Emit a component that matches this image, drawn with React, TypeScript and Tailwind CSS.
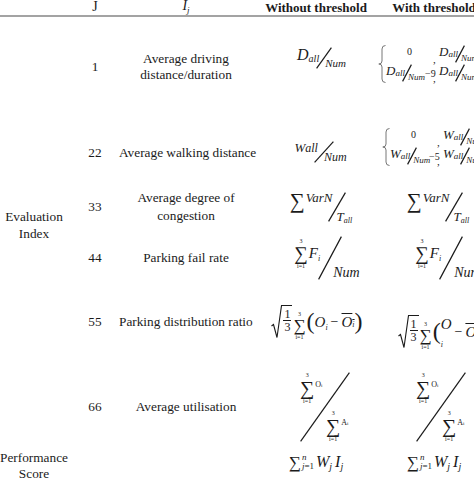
import React from "react";

const INK = "#1b1b1b";

const Slash = ({ w, h, className = "" }: { w: number; h: number; className?: string }) => (
  <svg width={w} height={h} viewBox={`0 0 ${w} ${h}`} className={"block shrink-0 " + className}>
    <line x1={0.6} y1={h - 0.6} x2={w - 0.6} y2={0.6} stroke={INK} strokeWidth={1.2} />
  </svg>
);

const Brace = ({ h }: { h: number }) => {
  const m = h / 2;
  return (
    <svg width={8} height={h} className="block shrink-0">
      <path
        d={`M7.5 0.5 Q4 0.5 4 4 L4 ${m - 3} Q4 ${m} 0.8 ${m} Q4 ${m} 4 ${m + 3} L4 ${h - 4} Q4 ${h - 0.5} 7.5 ${h - 0.5}`}
        fill="none"
        stroke="#666"
        strokeWidth={0.9}
      />
    </svg>
  );
};

const SumL = ({ top, bot, sCls, lCls }: { top: string; bot: string; sCls: string; lCls: string }) => (
  <span className="inline-flex flex-col items-center leading-none not-italic">
    <span className={lCls}>{top}</span>
    <span className={sCls}>∑</span>
    <span className={lCls}>{bot}</span>
  </span>
);

const SF = ({ L }: { L: string }) => (
  <span className="inline-flex h-[18px] italic leading-none">
    <span className="self-start flex items-baseline">
      <span className="text-[13px]">{L}</span>
      <span className="text-[9px] inline-block translate-y-[1px]">all</span>
    </span>
    <Slash w={10} h={18} className="-ml-[3px]" />
    <span className="self-end text-[9px] -ml-[4px]">Num</span>
  </span>
);

const Piece = ({ L, m, className }: { L: string; m: string; className: string }) => (
  <div className={"flex items-center " + className}>
    <Brace h={38} />
    <div className="flex flex-col">
      <div className="flex h-[19px] items-start">
        <span className="w-[47px] text-center text-[10px] leading-none pt-[2px]">0</span>
        <span className="w-[6px] text-[11px] leading-none pt-[9px]">,</span>
        <SF L={L} />
      </div>
      <div className="flex h-[19px] items-start">
        <span className="w-[39px] flex">
          <SF L={L} />
        </span>
        <span className="w-[8px] text-[10px] leading-none pt-[5px]">−{m}</span>
        <span className="w-[6px] text-[11px] leading-none pt-[9px]">,</span>
        <SF L={L} />
      </div>
    </div>
  </div>
);

const F1 = ({ className }: { className: string }) => (
  <span className={"inline-flex h-[22px] italic leading-none " + className}>
    <span className="self-start flex items-baseline">
      <span className="text-[16px]">D</span>
      <span className="text-[10px] inline-block translate-y-[2px]">all</span>
    </span>
    <Slash w={16} h={22} className="-ml-[3px]" />
    <span className="self-end text-[11px] -ml-[7px]">Num</span>
  </span>
);

const F2 = ({ className }: { className: string }) => (
  <span className={"inline-flex h-[22px] italic leading-none " + className}>
    <span className="self-start flex items-baseline">
      <span className="text-[13px]">W</span>
      <span className="text-[12px]">all</span>
    </span>
    <Slash w={20} h={22} className="-ml-[4px]" />
    <span className="self-end text-[12px] -ml-[10px]">Num</span>
  </span>
);

const F3 = ({ className }: { className: string }) => (
  <span className={"inline-flex h-[32px] italic leading-none " + className}>
    <span className="self-start flex items-start">
      <span className="not-italic text-[21px] leading-none">∑</span>
      <span className="text-[13px] ml-[1px]">VarN</span>
    </span>
    <Slash w={18} h={30} className="-ml-[5px] mt-[1px]" />
    <span className="self-end flex items-baseline -ml-[9px]">
      <span className="text-[13px]">T</span>
      <span className="text-[8px] inline-block translate-y-[2px]">all</span>
    </span>
  </span>
);

const F4 = ({ className }: { className: string }) => (
  <span className={"inline-flex h-[44px] leading-none " + className}>
    <span className="self-start flex items-center mt-[2px]">
      <SumL top="3" bot="i=1" sCls="text-[19px]" lCls="text-[6px]" />
      <span className="italic text-[15px] ml-[1px]">
        F<span className="text-[8px] inline-block translate-y-[3px]">i</span>
      </span>
    </span>
    <Slash w={24} h={44} className="-ml-[2px]" />
    <span className="self-end italic text-[14px] -ml-[9px]">Num</span>
  </span>
);

const F5 = ({ className }: { className: string }) => (
  <span className={"inline-flex items-center leading-none " + className}>
    <span className="flex">
      <svg width={11} height={34} className="block shrink-0">
        <path d="M0.5 21 L2.5 19.5 L6 32.5 L10.5 0.6 L11 0.6" fill="none" stroke={INK} strokeWidth={1.1} />
      </svg>
      <span className="flex flex-col items-center border-t border-[#1b1b1b] pt-[3px] px-[1px] text-[12px] h-[34px]">
        <span className="leading-[11px]">1</span>
        <span className="w-[8px] h-px bg-[#1b1b1b]" />
        <span className="leading-[12px]">3</span>
      </span>
    </span>
    <span className="ml-[1px]">
      <SumL top="3" bot="i=1" sCls="text-[17px]" lCls="text-[6px]" />
    </span>
    <span className="text-[24px] ml-[1px] -mt-[2px]">(</span>
    <span className="italic text-[15px]">
      O<span className="text-[8px] inline-block translate-y-[3px]">i</span>
    </span>
    <span className="text-[14px] mx-[3px]">−</span>
    <span className="italic text-[15px] overline decoration-1">
      O<span className="text-[8px]">i</span>
    </span>
    <span className="text-[24px] -mt-[2px]">)</span>
  </span>
);

const F6 = ({ className }: { className: string }) => (
  <span className={"inline-flex h-[70px] leading-none " + className}>
    <span className="self-start flex items-center w-[28px]">
      <SumL top="3" bot="i=1" sCls="text-[20px]" lCls="text-[6px]" />
      <span className="text-[8px] ml-[1px] -mt-[6px]">
        O<span className="text-[5px]">i</span>
      </span>
    </span>
    <Slash w={50} h={70} className="-ml-[28px]" />
    <span className="self-end flex items-center w-[26px] -ml-[24px]">
      <SumL top="3" bot="i=1" sCls="text-[20px]" lCls="text-[6px]" />
      <span className="text-[8px] ml-[1px] -mt-[6px]">
        A<span className="text-[5px]">i</span>
      </span>
    </span>
  </span>
);

const Perf = ({ className }: { className: string }) => (
  <span className={"inline-flex items-center leading-none " + className}>
    <span className="text-[17px]">∑</span>
    <span className="inline-flex flex-col text-[9px] ml-[1px] -mt-[1px]">
      <span className="italic">n</span>
      <span>
        <span className="italic">j</span>=1
      </span>
    </span>
    <span className="italic text-[16px] ml-[2px]">
      W<span className="text-[10px] inline-block translate-y-[3px]">j</span>
    </span>
    <span className="italic text-[16px] ml-[3px]">
      I<span className="text-[10px] inline-block translate-y-[3px]">j</span>
    </span>
  </span>
);

export default function App() {
  return (
    <div className="w-[474px] h-[480px] overflow-hidden bg-white text-[#1b1b1b] font-[family-name:'Liberation_Serif',serif]">
      <div className="w-[486px]">
        <div className="flex h-[17px] pt-[1px] pb-[2px] items-center border-b-2 border-[#a3a3a3] text-[13px] leading-none">
          <div className="w-[68px]" />
          <div className="w-[54px] text-center text-[14px]">J</div>
          <div className="w-[128px] text-center italic text-[14px] -mt-[2px]">
            I<span className="text-[9px] inline-block translate-y-[3px]">j</span>
          </div>
          <div className="w-[132px] text-center font-bold">Without threshold</div>
          <div className="w-[104px] text-center font-bold">With threshold</div>
        </div>

        <div className="flex">
          <div className="w-[68px] flex items-center justify-center pb-[18px] text-center text-[13.3px] leading-[17px]">
            Evaluation
            <br />
            Index
          </div>
          <div className="flex flex-col text-[13.3px]">
            <div className="flex h-[100px] items-center">
              <div className="w-[54px] text-center">1</div>
              <div className="w-[128px] text-center leading-[16px]">
                Average driving
                <br />
                distance/duration
              </div>
              <div className="w-[132px] flex justify-center">
                <F1 className="ml-[11px] mb-[18px]" />
              </div>
              <div className="w-[104px] flex">
                <Piece L="D" m="9" className="-ml-[4px] mb-[6px]" />
              </div>
            </div>

            <div className="flex h-[72px] items-center">
              <div className="w-[54px] text-center">22</div>
              <div className="w-[128px] text-center whitespace-nowrap -ml-[3px]">Average walking distance</div>
              <div className="w-[132px] flex justify-center ml-[3px]">
                <F2 className="ml-[9px] mb-[2px]" />
              </div>
              <div className="w-[104px] flex">
                <Piece L="W" m="5" className="mb-[12px]" />
              </div>
            </div>

            <div className="flex h-[36px] items-center">
              <div className="w-[54px] text-center">33</div>
              <div className="w-[128px] text-center leading-[18px]">
                Average degree of
                <br />
                congestion
              </div>
              <div className="w-[132px] flex justify-center">
                <F3 className="ml-[10px]" />
              </div>
              <div className="w-[104px] flex justify-center">
                <F3 className="ml-[8px]" />
              </div>
            </div>

            <div className="flex h-[66px] items-center">
              <div className="w-[54px] text-center">44</div>
              <div className="w-[128px] text-center">Parking fail rate</div>
              <div className="w-[132px] flex justify-center">
                <F4 className="ml-[22px]" />
              </div>
              <div className="w-[104px] flex justify-center">
                <F4 className="ml-[28px]" />
              </div>
            </div>

            <div className="flex h-[62px] items-center">
              <div className="w-[54px] text-center">55</div>
              <div className="w-[128px] text-center whitespace-nowrap -ml-[3px]">Parking distribution ratio</div>
              <div className="w-[132px] flex justify-center ml-[3px]">
                <F5 className="ml-[2px]" />
              </div>
              <div className="w-[104px] flex justify-center">
                <F5 className="ml-[16px] mt-[20px]" />
              </div>
            </div>

            <div className="flex h-[98px] pt-[10px] items-center">
              <div className="w-[54px] text-center">66</div>
              <div className="w-[128px] text-center">Average utilisation</div>
              <div className="w-[132px] flex justify-center">
                <F6 className="ml-[20px]" />
              </div>
              <div className="w-[104px] flex justify-center">
                <F6 className="ml-[16px]" />
              </div>
            </div>
          </div>
        </div>

        <div className="flex h-[30px] items-center text-[13.3px]">
          <div className="w-[68px] text-center leading-[16px]">
            Performance
            <br />
            Score
          </div>
          <div className="w-[54px]" />
          <div className="w-[128px]" />
          <div className="w-[132px] flex justify-center">
            <Perf className="mb-[8px]" />
          </div>
          <div className="w-[104px] flex justify-center">
            <Perf className="mb-[8px]" />
          </div>
        </div>
      </div>
    </div>
  );
}
